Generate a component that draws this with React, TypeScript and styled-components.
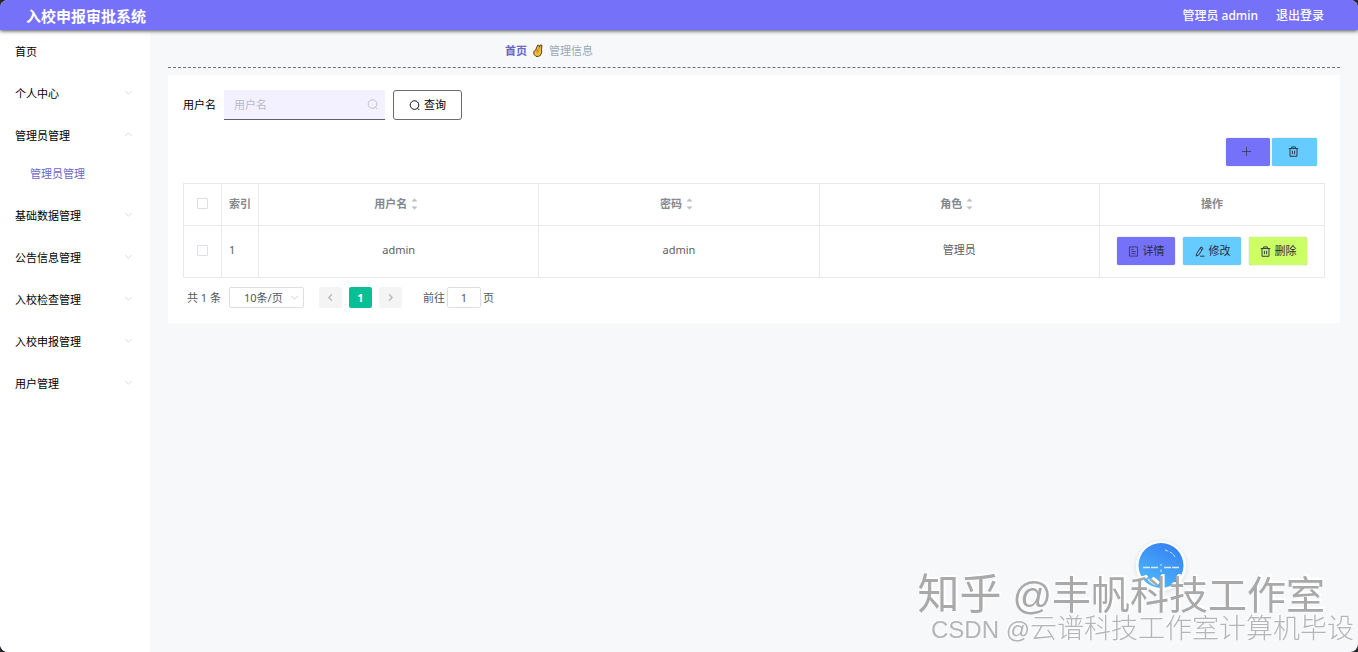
import React from "react";
import styled, { createGlobalStyle } from "styled-components";

const GlobalStyle = createGlobalStyle`
  * { box-sizing: border-box; }
  body {
    margin: 0;
    background: #26262c;
    color: #000;
    font-family: "Noto Sans", "Noto Sans CJK SC", sans-serif;
    font-size: 11px;
    line-height: 16px;
  }
  button, input, select { font: inherit; color: inherit; }
  a { color: inherit; text-decoration: none; }
`;

const Shell = styled.div`
  display: flex;
  flex-direction: column;
  min-height: 100vh;
  border-radius: 8px;
  overflow: hidden;
  background: #f7f8fa;
`;

const Header = styled.header`
  display: flex;
  align-items: center;
  justify-content: space-between;
  height: 30px;
  margin-bottom: 1px;
  padding: 2px 34px 0 26px;
  background: #7571f9;
  color: #fff;
  box-shadow: 0 1px 4px rgba(0, 0, 0, 0.7);
  z-index: 1;
`;

const Brand = styled.h1`
  margin: 0;
  font-size: 15px;
  line-height: 24px;
  font-weight: 700;
`;

const Account = styled.div`
  display: flex;
  gap: 18px;
  font-size: 12px;
  font-weight: 500;
`;

const Body = styled.div`
  display: flex;
  flex: 1;
`;

const Sidebar = styled.nav`
  flex: none;
  width: 150px;
  background: #fff;
`;

const MenuList = styled.ul`
  margin: 0;
  padding: 0;
  list-style: none;
`;

const MenuLink = styled.a`
  display: flex;
  align-items: center;
  justify-content: space-between;
  height: 42px;
  padding: 0 17px 0 15px;
`;

const SubLink = styled.a`
  display: block;
  padding: 9px 15px 13px 30px;
  color: #6c67c4;
`;

const Main = styled.main`
  flex: 1;
  min-width: 0;
  padding: 0 18px;
`;

const Crumbs = styled.nav`
  display: flex;
  align-items: center;
  gap: 6px;
  height: 37px;
  padding: 3px 0 0 calc(50% - 249px);
  border-bottom: 1px dashed #6c7088;
  color: #97a8b8;
`;

const CrumbHome = styled.a`
  color: #6c67c4;
  font-weight: 700;
`;

const Card = styled.section`
  margin-top: 7px;
  padding: 15px;
  background: #fff;
`;

const SearchForm = styled.form`
  display: flex;
  align-items: center;
  gap: 8px;
`;

const Field = styled.div`
  display: flex;
  align-items: center;
  width: 161px;
  height: 30px;
  padding: 0 7px 0 10px;
  background: #f3f1ff;
  border-bottom: 1px solid #5f5f6b;
  color: #b9b9c8;
`;

const FieldInput = styled.input`
  flex: 1;
  min-width: 0;
  padding: 0;
  border: 0;
  outline: 0;
  background: none;
  color: #333;
  &::placeholder { color: #b9b9c8; opacity: 1; }
`;

const QueryButton = styled.button`
  display: flex;
  align-items: center;
  justify-content: center;
  gap: 4px;
  width: 69px;
  height: 30px;
  padding: 0;
  background: #fff;
  border: 1px solid #6a6a6a;
  border-radius: 3px;
`;

const Toolbar = styled.div`
  display: flex;
  justify-content: flex-end;
  gap: 2px;
  padding: 18px 8px 17px 0;
`;

const ColorButton = styled.button<{ $tone: string; $width: number }>`
  display: flex;
  align-items: center;
  justify-content: center;
  gap: 4px;
  width: ${(p) => p.$width}px;
  height: 28px;
  padding: 0;
  border: 0;
  border-radius: 2px;
  background: ${(p) => p.$tone};
  color: #2b2b3a;
  box-shadow: 0 0 1px rgba(0, 0, 0, 0.5);
`;

const IconButton = styled(ColorButton)`
  padding: 0 3px 2px 0;
`;

const Grid = styled.table`
  width: 100%;
  table-layout: fixed;
  border-collapse: separate;
  border-spacing: 0;
  border: solid #e8e9ed;
  border-width: 1px 0 0 1px;
`;

const Col = styled.col<{ $width?: number }>`
  width: ${(p) => (p.$width ? `${p.$width}px` : "auto")};
`;

const HeadCell = styled.th<{ $left?: boolean }>`
  height: 42px;
  padding: 0 7px 2px;
  border: solid #e8e9ed;
  border-width: 0 1px 1px 0;
  color: #85898f;
  font-weight: 700;
  text-align: ${(p) => (p.$left ? "left" : "center")};
`;

const Cell = styled.td<{ $left?: boolean }>`
  height: 52px;
  padding: 0 7px 3px;
  border: solid #e8e9ed;
  border-width: 0 1px 1px 0;
  color: #5c5e63;
  text-align: ${(p) => (p.$left ? "left" : "center")};
`;

const ActionCell = styled(Cell)`
  padding-bottom: 1px;
`;

const HeadLabel = styled.span`
  display: inline-flex;
  align-items: center;
  gap: 4px;
  padding-right: 5px;
`;

const Check = styled.input`
  appearance: none;
  display: block;
  width: 11px;
  height: 11px;
  margin: 0 auto;
  border: 1px solid #dcdfe6;
  border-radius: 1px;
  background: #fff;
`;

const Actions = styled.div`
  display: flex;
  justify-content: center;
  gap: 8px;
`;

const Pager = styled.div`
  display: flex;
  align-items: center;
  gap: 7px;
  margin-top: 9px;
  padding-left: 4px;
  color: #55585e;
`;

const Total = styled.span`
  margin-right: 1px;
`;

const SizeBox = styled.div`
  display: grid;
  align-items: center;
  margin-right: 8px;
  color: #c0c4cc;
  & > * { grid-area: 1 / 1; }
  & > svg { justify-self: end; margin-right: 5px; pointer-events: none; }
`;

const SizeSelect = styled.select`
  appearance: none;
  width: 75px;
  height: 21px;
  padding: 0 0 0 14px;
  border: 1px solid #dcdfe6;
  border-radius: 2px;
  background: #fff;
  color: #55585e;
`;

const PageButton = styled.button<{ $active?: boolean }>`
  display: flex;
  align-items: center;
  justify-content: center;
  width: 23px;
  height: 21px;
  padding: 0;
  border: 0;
  border-radius: 2px;
  background: ${(p) => (p.$active ? "#0abf96" : "#f4f4f5")};
  color: ${(p) => (p.$active ? "#fff" : "#b4b7be")};
  font-weight: 700;
`;

const Jump = styled.label`
  display: flex;
  align-items: center;
  gap: 2px;
  margin-left: 14px;
`;

const JumpInput = styled.input`
  width: 34px;
  height: 21px;
  padding: 0;
  border: 1px solid #dcdfe6;
  border-radius: 2px;
  text-align: center;
`;

const Orb = styled.div`
  position: fixed;
  right: 172px;
  bottom: 61px;
  width: 50px;
  height: 50px;
  border-radius: 50%;
  box-shadow: 0 1px 5px rgba(0, 0, 0, 0.12);
`;

const Marks = styled.div`
  position: fixed;
  right: 4px;
  bottom: 8px;
  display: flex;
  flex-direction: column;
  align-items: flex-end;
  pointer-events: none;
  white-space: nowrap;
  font-family: "Liberation Sans", "Noto Sans CJK SC", sans-serif;
`;

const MarkLarge = styled.span`
  margin-right: 29px;
  font-size: 39px;
  line-height: 38px;
  color: #a9a9a9;
  text-shadow: 1px -1px 0 #fff, 2px -2px 0 #fff;
`;

const MarkSite = styled.span`
  font-size: 42px;
`;

const MarkSmall = styled.span`
  font-size: 27px;
  line-height: 28px;
  font-weight: 300;
  color: #b4b5b8;
  text-shadow: -1px -1px 0 #fff;
`;

const MarkLatin = styled.span`
  font-size: 24px;
`;

const Line = ({ size = 11, d, width = 1 }: { size?: number; d: string; width?: number }) => (
  <svg width={size} height={size} viewBox="0 0 12 12" fill="none" stroke="currentColor" strokeWidth={width} aria-hidden="true">
    <path d={d} />
  </svg>
);

const SEARCH = "M6 .8a4.7 4.7 0 1 0 0 9.4a4.7 4.7 0 0 0 0-9.4M9.3 8.9L11.4 11";
const PLUS = "M6 1V11M1 6H11";
const TRASH = "M.8 2.8H11.2M4 2.6V1H8V2.6M2.2 3V11.2H9.8V3M4.8 5.2V9M7.2 5.2V9";
const TICKETS = "M1.6 1H10.4V11H1.6ZM3.6 3.7H6M3.6 6H8.4M3.6 8.3H8.4";
const EDIT = "M7.6 1L9.9 2.4L5.2 9.8L2.4 11L2.9 8.4ZM6.6 2.7L8.9 4.1M6.6 11.1H11.4";
const DOWN = "M1.5 4L6 8L10.5 4";
const UP = "M1.5 8L6 4L10.5 8";
const LEFT = "M7.5 2.5L4.2 6L7.5 9.5";
const RIGHT = "M4.5 2.5L7.8 6L4.5 9.5";

const ArrowTint = styled.span`
  display: flex;
  padding-bottom: 3px;
  color: #cbced4;
`;

const SortIcon = () => (
  <svg width="7" height="12" viewBox="0 0 7 12" fill="#b9bdc5" aria-hidden="true">
    <path d="M3.5 0.5L6.5 3.5H0.5ZM0.5 8.5H6.5L3.5 11.5Z" />
  </svg>
);

const HandIcon = () => (
  <svg width="10" height="13" viewBox="0 0 10 13" aria-hidden="true">
    <path
      d="M2.6 6.2L4.6 1.2L6.2 1.4L6.4 3L7.6 .9L9 1.5L8.4 5.8L8.8 8.2L7.4 11.4L5.4 12.4H3L1 10.4L.8 7.4Z"
      fill="#f5bb35"
      stroke="#41321d"
      strokeWidth=".9"
    />
    <path d="M5.6 5.6L6.4 3M2.6 6.4L5 6.2L5.2 8L3.4 8.8" fill="none" stroke="#a8691d" strokeWidth=".7" />
  </svg>
);

const OrbIcon = () => (
  <svg width="50" height="50" viewBox="0 0 50 50" aria-hidden="true">
    <defs>
      <linearGradient id="orb" x1="0.8" y1="0" x2="0.3" y2="1">
        <stop offset="0" stopColor="#347ff3" />
        <stop offset="1" stopColor="#4fb8fb" />
      </linearGradient>
    </defs>
    <circle cx="25" cy="25" r="25" fill="#fff" />
    <circle cx="25" cy="24.5" r="22.5" fill="url(#orb)" />
    <g stroke="#d5eaff" fill="none">
      <path d="M7 26.5H22M28 26.5H43" strokeWidth="1.4" strokeDasharray="7 1" />
      <path d="M25 23V25M25 28.500V31" strokeWidth="1" />
      <path d="M29 9L33 10.500M34 11Q37 12.500 39 16" strokeWidth="1" strokeDasharray="3 1" />
      <path d="M12 38Q15 42 20 44" strokeWidth="2" />
    </g>
  </svg>
);

const SECTIONS = [
  { label: "个人中心" },
  { label: "管理员管理", child: "管理员管理" },
  { label: "基础数据管理" },
  { label: "公告信息管理" },
  { label: "入校检查管理" },
  { label: "入校申报管理" },
  { label: "用户管理" },
];

const ROWS = [{ id: 1, name: "admin", password: "admin", role: "管理员" }];

export default function App() {
  return (
    <>
      <GlobalStyle />
      <Shell>
        <Header>
          <Brand>入校申报审批系统</Brand>
          <Account>
            <span>管理员 admin</span>
            <a href="#logout">退出登录</a>
          </Account>
        </Header>
        <Body>
          <Sidebar>
            <MenuList>
              <li><MenuLink href="#home">首页</MenuLink></li>
              {SECTIONS.map((s) => (
                <li key={s.label}>
                  <MenuLink href="#section">
                    {s.label}
                    <ArrowTint><Line size={9} d={s.child ? UP : DOWN} /></ArrowTint>
                  </MenuLink>
                  {s.child && <SubLink href="#admins">{s.child}</SubLink>}
                </li>
              ))}
            </MenuList>
          </Sidebar>
          <Main>
            <Crumbs>
              <CrumbHome href="#home">首页</CrumbHome>
              <HandIcon />
              <span>管理信息</span>
            </Crumbs>
            <Card>
              <SearchForm onSubmit={(e) => e.preventDefault()}>
                <label htmlFor="username">用户名</label>
                <Field>
                  <FieldInput id="username" placeholder="用户名" />
                  <Line d={SEARCH} />
                </Field>
                <QueryButton type="submit"><Line d={SEARCH} />查询</QueryButton>
              </SearchForm>
              <Toolbar>
                <IconButton $tone="#7571f9" $width={44} aria-label="新增"><Line d={PLUS} width={0.7} /></IconButton>
                <IconButton $tone="#66ccff" $width={45} aria-label="删除"><Line d={TRASH} /></IconButton>
              </Toolbar>
              <Grid>
                <colgroup>
                  <Col $width={38} />
                  <Col $width={37} />
                  <Col />
                  <Col />
                  <Col />
                  <Col $width={225} />
                </colgroup>
                <thead>
                  <tr>
                    <HeadCell><Check type="checkbox" aria-label="全选" /></HeadCell>
                    <HeadCell $left>索引</HeadCell>
                    <HeadCell><HeadLabel>用户名<SortIcon /></HeadLabel></HeadCell>
                    <HeadCell><HeadLabel>密码<SortIcon /></HeadLabel></HeadCell>
                    <HeadCell><HeadLabel>角色<SortIcon /></HeadLabel></HeadCell>
                    <HeadCell>操作</HeadCell>
                  </tr>
                </thead>
                <tbody>
                  {ROWS.map((r) => (
                    <tr key={r.id}>
                      <Cell><Check type="checkbox" aria-label={r.name} /></Cell>
                      <Cell $left>{r.id}</Cell>
                      <Cell>{r.name}</Cell>
                      <Cell>{r.password}</Cell>
                      <Cell>{r.role}</Cell>
                      <ActionCell>
                        <Actions>
                          <ColorButton $tone="#7571f9" $width={58}><Line d={TICKETS} width={0.8} />详情</ColorButton>
                          <ColorButton $tone="#66ccff" $width={58}><Line d={EDIT} />修改</ColorButton>
                          <ColorButton $tone="#ccff66" $width={58}><Line d={TRASH} />删除</ColorButton>
                        </Actions>
                      </ActionCell>
                    </tr>
                  ))}
                </tbody>
              </Grid>
              <Pager>
                <Total>共 1 条</Total>
                <SizeBox>
                  <SizeSelect aria-label="每页条数"><option>10条/页</option></SizeSelect>
                  <Line size={9} d={DOWN} />
                </SizeBox>
                <PageButton aria-label="上一页"><Line d={LEFT} width={1.4} /></PageButton>
                <PageButton $active>1</PageButton>
                <PageButton aria-label="下一页"><Line d={RIGHT} width={1.4} /></PageButton>
                <Jump>前往<JumpInput defaultValue="1" />页</Jump>
              </Pager>
            </Card>
          </Main>
        </Body>
      </Shell>
      <Orb><OrbIcon /></Orb>
      <Marks>
        <MarkLarge><MarkSite>知乎</MarkSite> @丰帆科技工作室</MarkLarge>
        <MarkSmall><MarkLatin>CSDN @</MarkLatin>云谱科技工作室计算机毕设</MarkSmall>
      </Marks>
    </>
  );
}
